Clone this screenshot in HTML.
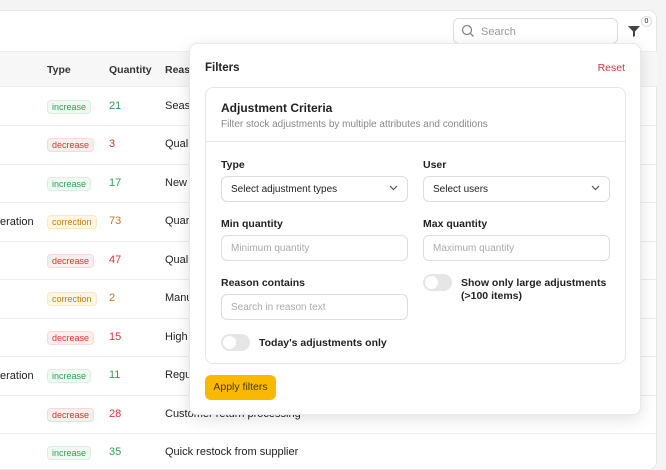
<!DOCTYPE html>
<html><head><style>
*{box-sizing:border-box;margin:0;padding:0}
body{width:666px;height:450px;overflow:hidden;background:#f4f4f5;font-family:"Liberation Sans",sans-serif;font-size:11px;color:#222;position:relative}
.card{position:absolute;left:-10px;top:10px;width:667px;height:460px;background:#fff;border:1px solid #e6e6e6;border-radius:8px}
.search{position:absolute;left:453px;top:18px;width:165px;height:26px;border:1px solid #ddd;border-radius:6px;color:#999;font-size:11px;padding:7px 0 0 27px}
.thead{position:absolute;left:0;top:51px;width:657px;height:36px;background:#f7f7f7;border-top:1px solid #eee;border-bottom:1px solid #eee}
.th{position:absolute;top:64px;font-weight:bold;font-size:10.5px;color:#333}
.row{position:absolute;left:0;width:657px;height:1px;background:#ececec}
.badge{position:absolute;left:47px;font-size:9px;padding:1px 4px;border-radius:4px;border:1px solid}
.inc{color:#2f9e57;background:#eefaf1;border-color:#d8f1df}
.dec{color:#d33;background:#fdeeee;border-color:#f8dada}
.cor{color:#c47a16;background:#fff6e6;border-color:#fbe8c4}
.q{position:absolute;left:109px;font-size:11px}
.r{position:absolute;left:165px;font-size:11px}
.pop{position:absolute;left:189px;top:43px;width:452px;height:372px;background:#fff;border:1px solid #e8e8e8;border-radius:8px;box-shadow:0 4px 16px rgba(0,0,0,.12)}
.in{position:absolute;left:15px;top:43px;width:421px;height:277px;border:1px solid #e6e6e6;border-radius:8px}
.lbl{position:absolute;font-weight:bold;font-size:10.5px;color:#222}
.inp{position:absolute;width:187px;height:26px;border:1px solid #ddd;border-radius:6px;padding:7px 0 0 9px;font-size:10px;color:#aaa}
.sel{color:#222}
.chev{position:absolute;right:9px;top:8px}
.tg{position:absolute;width:29px;height:17px;border-radius:9px;background:#e6e6e6}
.tg:after{content:"";position:absolute;left:2px;top:2px;width:13px;height:13px;border-radius:50%;background:#fff}
</style></head><body>
<div class="card"></div>
<div class="search">Search</div>
<svg style="position:absolute;left:461px;top:24px" width="14" height="14" viewBox="0 0 14 14"><circle cx="6" cy="6" r="4.5" fill="none" stroke="#888" stroke-width="1.3"/><line x1="9.3" y1="9.3" x2="12.5" y2="12.5" stroke="#888" stroke-width="1.3"/></svg>
<svg style="position:absolute;left:628px;top:25px" width="12" height="12" viewBox="0 0 12 12"><path d="M0 1h12L7 6.5V11l-2 1V6.5z" fill="#444"/></svg>
<div style="position:absolute;left:641px;top:16px;width:11px;height:11px;border:1px solid #ddd;border-radius:50%;font-size:7px;text-align:center;line-height:10px;background:#fff">0</div>
<div class="thead"></div>
<div class="th" style="left:47px">Type</div><div class="th" style="left:109px">Quantity</div><div class="th" style="left:165px">Reason</div>
<div class="row" style="top:125px"></div><div class="row" style="top:164px"></div><div class="row" style="top:202px"></div><div class="row" style="top:241px"></div><div class="row" style="top:279px"></div><div class="row" style="top:318px"></div><div class="row" style="top:356px"></div><div class="row" style="top:395px"></div><div class="row" style="top:433px"></div>
<div class="badge inc" style="top:100px">increase</div><div class="q" style="top:100px;color:#2f9e57">21</div><div class="r" style="top:100px">Season</div>
<div class="badge dec" style="top:138px">decrease</div><div class="q" style="top:138px;color:#d33">3</div><div class="r" style="top:138px">Quality</div>
<div class="badge inc" style="top:177px">increase</div><div class="q" style="top:177px;color:#2f9e57">17</div><div class="r" style="top:177px">New p</div>
<div style="position:absolute;left:0;top:216px">eration</div>
<div class="badge cor" style="top:215px">correction</div><div class="q" style="top:215px;color:#c47a16">73</div><div class="r" style="top:215px">Quart</div>
<div class="badge dec" style="top:254px">decrease</div><div class="q" style="top:254px;color:#d33">47</div><div class="r" style="top:254px">Quality</div>
<div class="badge cor" style="top:292px">correction</div><div class="q" style="top:292px;color:#c47a16">2</div><div class="r" style="top:292px">Manu</div>
<div class="badge dec" style="top:331px">decrease</div><div class="q" style="top:331px;color:#d33">15</div><div class="r" style="top:331px">High</div>
<div style="position:absolute;left:0;top:370px">eration</div>
<div class="badge inc" style="top:369px">increase</div><div class="q" style="top:369px;color:#2f9e57">11</div><div class="r" style="top:369px">Regul</div>
<div class="badge dec" style="top:408px">decrease</div><div class="q" style="top:408px;color:#d33">28</div><div class="r" style="top:408px">Customer return processing</div>
<div class="badge inc" style="top:446px">increase</div><div class="q" style="top:446px;color:#2f9e57">35</div><div class="r" style="top:446px">Quick restock from supplier</div>
<div class="pop">
<div style="position:absolute;left:15px;top:18px;font-weight:bold;font-size:11.5px">Filters</div>
<div style="position:absolute;right:15px;top:18px;color:#d33;font-size:10.5px">Reset</div>
<div class="in">
<div style="position:absolute;left:15px;top:13px;font-weight:bold;font-size:12px">Adjustment Criteria</div>
<div style="position:absolute;left:15px;top:31px;font-size:10px;color:#888">Filter stock adjustments by multiple attributes and conditions</div>
<div style="position:absolute;left:0;top:53px;width:419px;height:1px;background:#e6e6e6"></div>
<div class="lbl" style="left:15px;top:71px">Type</div>
<div class="inp sel" style="left:15px;top:88px">Select adjustment types<svg class="chev" width="9" height="6" viewBox="0 0 9 6"><path d="M1 1l3.5 3.5L8 1" fill="none" stroke="#555" stroke-width="1.2"/></svg></div>
<div class="lbl" style="left:217px;top:71px">User</div>
<div class="inp sel" style="left:217px;top:88px">Select users<svg class="chev" width="9" height="6" viewBox="0 0 9 6"><path d="M1 1l3.5 3.5L8 1" fill="none" stroke="#555" stroke-width="1.2"/></svg></div>
<div class="lbl" style="left:15px;top:130px">Min quantity</div>
<div class="inp" style="left:15px;top:147px">Minimum quantity</div>
<div class="lbl" style="left:217px;top:130px">Max quantity</div>
<div class="inp" style="left:217px;top:147px">Maximum quantity</div>
<div class="lbl" style="left:15px;top:189px">Reason contains</div>
<div class="inp" style="left:15px;top:206px">Search in reason text</div>
<div class="tg" style="left:217px;top:186px"></div>
<div class="lbl" style="left:255px;top:189px;line-height:13px">Show only large adjustments<br>(&gt;100 items)</div>
<div class="tg" style="left:15px;top:246px"></div>
<div class="lbl" style="left:53px;top:249px">Today's adjustments only</div>
</div>
<div style="position:absolute;left:15px;top:331px;width:71px;height:25px;background:#fbb800;border-radius:6px;font-size:10.5px;color:#4a3500;text-align:center;line-height:25px">Apply filters</div>
</div>
</body></html>
